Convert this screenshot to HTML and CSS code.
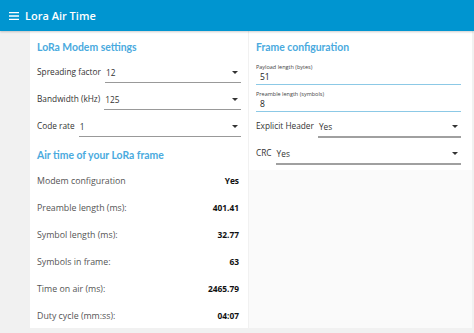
FILE: index.html
```html
<!DOCTYPE html>
<html lang="en">
<head>
    <meta charset="UTF-8">
    <title>Lora Air Time</title>
    <link rel="stylesheet" href="styles.css">
</head>
<body>

<div class="toolbar">
    <svg class="menu-icon" width="10" height="8" viewBox="0 0 10 8"><path d="M0 0.5h10M0 4h10M0 7.5h10" stroke="#fff" stroke-width="1.3"/></svg>
    <span class="app-title">Lora Air Time</span>
</div>

<div class="content">
    <div class="column">
        <div class="group">
            <h2>LoRa Modem settings</h2>
            <div class="field">
                <label>Spreading factor</label>
                <div class="select"><span>12</span><i class="caret"></i></div>
            </div>
            <div class="field">
                <label>Bandwidth (kHz)</label>
                <div class="select"><span>125</span><i class="caret"></i></div>
            </div>
            <div class="field">
                <label>Code rate</label>
                <div class="select"><span>1</span><i class="caret"></i></div>
            </div>

            <h2 class="second">Air time of your LoRa frame</h2>
            <div class="stat"><span>Modem configuration</span><b>Yes</b></div>
            <div class="stat"><span>Preamble length (ms):</span><b>401.41</b></div>
            <div class="stat"><span>Symbol length (ms):</span><b>32.77</b></div>
            <div class="stat"><span>Symbols in frame:</span><b>63</b></div>
            <div class="stat"><span>Time on air (ms):</span><b>2465.79</b></div>
            <div class="stat"><span>Duty cycle (mm:ss):</span><b>04:07</b></div>
        </div>
    </div>

    <div class="column shaded">
        <div class="group">
            <h2>Frame configuration</h2>
            <div class="input">
                <label>Payload length (bytes)</label>
                <div class="value">51</div>
            </div>
            <div class="input">
                <label>Preamble length (symbols)</label>
                <div class="value">8</div>
            </div>
            <div class="field">
                <label>Explicit Header</label>
                <div class="select thick"><span>Yes</span><i class="caret"></i></div>
            </div>
            <div class="field">
                <label>CRC</label>
                <div class="select thick"><span>Yes</span><i class="caret"></i></div>
            </div>
        </div>
    </div>
</div>

</body>
</html>
```

FILE: styles.css
```css
body { margin: 0; font-family: "Open Sans", "Noto Sans", sans-serif; background: #f1f1f1; color: #222; }
.toolbar { height: 31px; background: #0095d0; color: #fff; display: flex; align-items: center; padding-left: 9px; box-shadow: 0 1px 2px rgba(0,0,0,0.2); position: relative; }
.menu-icon { margin-right: 6px; }
.app-title { font-size: 11px; font-weight: 600; }

.content { display: flex; padding-left: 30px; gap: 1px; height: 297px; }
.column { width: 218px; background: #fff; }
.column.shaded { width: 223px; background: #fafafa; }
.group { background: #fff; padding: 9px 7px 4px 7px; }
.shaded .group { padding-bottom: 4px; }

h2 { margin: 0 0 4px; font-family: Lato, "Open Sans", sans-serif; font-size: 10.4px; font-weight: 700; color: #4aaade; line-height: 14px; }
h2.second { margin-top: 9px; margin-bottom: 5px; }

.field { display: flex; align-items: center; height: 27px; gap: 4px; font-size: 8.3px; color: #333; }
.select { flex: 1; display: flex; align-items: flex-end; justify-content: space-between; height: 22px; border-bottom: 1px solid #999; padding: 0 3px 4px 1px; box-sizing: border-box; }
.select.thick { border-bottom: 2px solid #a0a0a0; margin-right: 4px; height: 23px; margin-top: 1px; }
.caret { width: 0; height: 0; margin-bottom: 4px; border-left: 3px solid transparent; border-right: 3px solid transparent; border-top: 3px solid #333; }

.stat { display: flex; justify-content: space-between; align-items: center; height: 27px; padding-right: 2px; font-size: 8.8px; color: #555; }
.stat b { color: #111; font-weight: 700; font-size: 8.4px; }

.input { height: 27px; margin-right: 4px; border-bottom: 1px solid #8cc9e6; box-sizing: border-box; display: flex; flex-direction: column; justify-content: flex-end; padding-bottom: 2px; }
.input label { font-size: 5.5px; color: #444; line-height: 8px; }
.input .value { font-size: 8.5px; padding-left: 4px; line-height: 11px; }
```
